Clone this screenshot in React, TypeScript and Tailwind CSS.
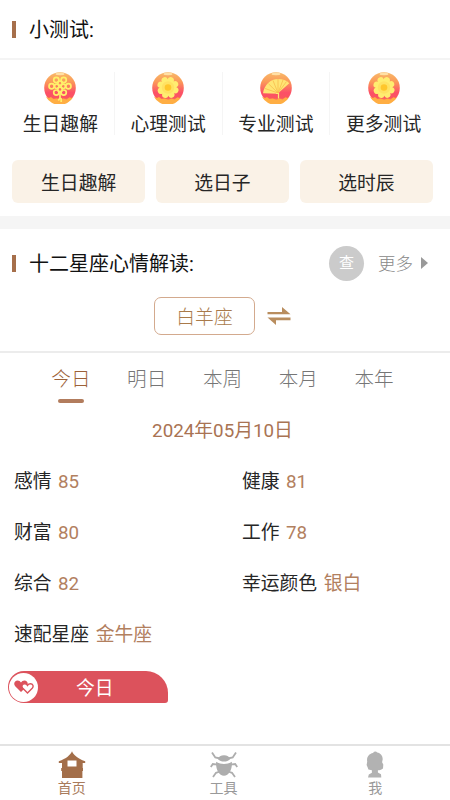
const tests = [
  { label: '生日趣解', icon: 'knot' },
  { label: '心理测试', icon: 'flower' },
  { label: '专业测试', icon: 'fan' },
  { label: '更多测试', icon: 'flower' },
];

const shortcuts = ['生日趣解', '选日子', '选时辰'];

const tabs = ['今日', '明日', '本周', '本月', '本年'];

const scores = [
  { name: '感情', value: '85' },
  { name: '健康', value: '81' },
  { name: '财富', value: '80' },
  { name: '工作', value: '78' },
  { name: '综合', value: '82' },
  { name: '幸运颜色', value: '银白' },
  { name: '速配星座', value: '金牛座' },
];

function Knot() {
  const loops = [
    [12.3, 8], [19.7, 8], [7.6, 14.3], [24.4, 14.3], [12.3, 20.6], [19.7, 20.6],
    [16, 11.2], [12.8, 14.3], [19.2, 14.3], [16, 17.4],
  ];
  return (
    <g fill="none" stroke="#fff06a" strokeWidth="1.7">
      {loops.map(([x, y], i) => (
        <circle key={i} cx={x} cy={y} r={i < 6 ? 2.6 : 2.2} />
      ))}
      <path d="M16 20v6M14.3 28.5l1.7-2.5 1.2 1v3" />
    </g>
  );
}

function Flower() {
  return (
    <g>
      <g fill="#ffed70">
        {[0, 45, 90, 135, 180, 225, 270, 315].map((a) => (
          <ellipse key={a} cx="16" cy="8.2" rx="3.3" ry="3.7" transform={`rotate(${a + 20} 16 15.5)`} />
        ))}
        <circle cx="16" cy="15.5" r="8" />
      </g>
      <circle cx="16" cy="15.5" r="6.2" fill="#ffe263" />
      <circle cx="16" cy="15.5" r="3.3" fill="#ffc62c" />
    </g>
  );
}

function Fan() {
  return (
    <g>
      <path d="M3 21.2C4.3 13 10.5 7 18 7c4.5 0 8.700 1.200 11.300 4.200L20 19.500l-1.800 2.200z" fill="#ffe575" />
      <g stroke="#f8bd4d" strokeWidth=".8">
        <path d="M18 21L5 16.500M18 21L8.500 11.800M18 21L13 8.500M18 21V7M18 21l5-13M18 21l8.500-11.500" />
      </g>
      <path d="M16 21.500h2.500v5" fill="none" stroke="#ffe575" strokeWidth="1.2" />
    </g>
  );
}

function TestIcon({ type }: { type: string }) {
  return (
    <svg viewBox="0 0 32 32" className="h-8 w-8 shrink-0">
      <defs>
        <linearGradient id={`ball-${type}`} x1="0" y1="0" x2="0" y2="1">
          <stop offset="0" stopColor="#f8ba69" />
          <stop offset=".3" stopColor="#fb9a59" />
          <stop offset=".65" stopColor="#fc4f67" />
          <stop offset=".8" stopColor="#fb555f" />
          <stop offset="1" stopColor="#ffad47" />
        </linearGradient>
      </defs>
      <circle cx="16" cy="16" r="15.8" fill={`url(#ball-${type})`} />
      <path d="M2 25l3 1 2-1 2.400 2 3.400-.6 3.400 1.400 3.300-1.200 3 .8 3-2.200 2.200.8 1.600-1A15.800 15.800 0 012 25z" fill="#ffae43" />
      <ellipse cx="16" cy="2" rx="4.5" ry="1.2" fill="#ffe0a5" />
      {type === 'knot' && <Knot />}
      {type === 'flower' && <Flower />}
      {type === 'fan' && <Fan />}
    </svg>
  );
}

function SectionTitle({ text }: { text: string }) {
  return (
    <div className="flex items-center">
      <i className="mr-[13px] h-[17px] w-1 bg-[#a66f4b]" />
      <h2 className="pt-[2px] text-[20px] leading-7 text-[#111]">{text}</h2>
    </div>
  );
}

function HomeIcon() {
  return (
    <svg viewBox="0 0 28 28" className="h-7 w-7" fill="#a36e49">
      <path fillRule="evenodd" d="M14 .3c1.600 3.700 5.400 7.200 13.200 10v1.800h-2.500v5H25v3h-.6v7H4v-7h-.8v-3H4v-5H.8v-1.800C8.400 7.600 12.300 4 14 .3zM9.500 9.500v6h9v-6z" />
    </svg>
  );
}

function BugIcon() {
  return (
    <svg viewBox="0 0 28 28" className="h-7 w-7">
      <g fill="none" stroke="#adadad" strokeWidth="1.8">
        <path d="M2 1.500l3.300 5 5 1M26 1.500l-3.300 5-5 1M.8 16l2-3 5 .6M27.200 16l-2-3-5 .6M3 26l3-4.200 4-1.300M25 26l-3-4.200-4-1.300" />
      </g>
      <g fill="#adadad">
        <path d="M8 8.200C8.500 5.800 10.800 4.200 14 4.200s5.500 1.600 6 4c-1.600 1.600-3.600 2.400-6 2.400s-4.400-.8-6-2.400z" />
        <path d="M6.200 10.800c2.200 1.400 4.800 2.200 7.800 2.200s5.600-.8 7.800-2.200c.8 6.700-2.400 14-7.800 14s-8.600-7.300-7.800-14z" />
      </g>
    </svg>
  );
}

function PersonIcon() {
  return (
    <svg viewBox="0 0 28 28" className="h-7 w-7" fill="#b2b2b2">
      <path d="M13 .7l2-.2 1.200 1c3.300.7 5.500 3.200 5.500 6.700l-.6 3 1.200 2.400-.3 4-2 1.200c-1.300.8-2.500.3-3.100.4v2.300l3.100 1.700.3 3.300H7l.8-3 3.100-1.700v-2.600l-3.500-.6-.8-2.400-1-2.300.6-3.100C5.400 6.400 7.700 2.800 12 2z" />
    </svg>
  );
}

const nav = [
  { label: '首页', icon: <HomeIcon /> },
  { label: '工具', icon: <BugIcon /> },
  { label: '我', icon: <PersonIcon /> },
];

export default function App() {
  return (
    <div className="flex h-[800px] w-[450px] flex-col overflow-hidden bg-white font-[Roboto,'Noto_Sans_CJK_SC',sans-serif] text-[#262626]">
      <section>
        <div className="flex h-[60px] items-center border-b-2 border-[#f4f4f4] pl-3">
          <SectionTitle text="小测试:" />
        </div>
        <div className="ml-[7px] flex w-[430px] pt-3">
          {tests.map((t, i) => (
            <div
              key={i}
              className="flex h-[63px] flex-1 flex-col items-center border-r border-[#f5f5f5] last:border-0"
            >
              <TestIcon type={t.icon} />
              <span className="mt-[7px] text-[18.8px] leading-7">{t.label}</span>
            </div>
          ))}
        </div>
        <div className="mt-[25px] grid grid-cols-3 gap-[10.5px] pr-[17px] pb-[13px] pl-3">
          {shortcuts.map((s) => (
            <button key={s} className="h-[43px] rounded-[6px] bg-[#faf2e7] pt-[5px] text-[18.8px]">
              {s}
            </button>
          ))}
        </div>
      </section>

      <div className="h-[13px] bg-[#f5f5f5]" />

      <section>
        <div className="flex h-[68px] items-center pl-3">
          <SectionTitle text="十二星座心情解读:" />
          <div className="mr-[22px] ml-auto flex items-center text-[#999]">
            <span className="mr-3.5 flex h-[35px] w-[35px] items-center justify-center rounded-full bg-[#cbcbcb] pt-px text-[15px] text-white">
              查
            </span>
            <span className="pt-[3px] text-[17.5px] font-light text-[#888]">更多</span>
            <svg viewBox="0 0 7 12" className="ml-2 h-3 w-[7px]" fill="#999">
              <path d="M0 0l7 6-7 6z" />
            </svg>
          </div>
        </div>
        <div className="flex h-14 items-start border-b-2 border-[#ececec] pl-[154px]">
          <button className="h-[38px] w-[101px] rounded-[7px] border border-[#d3aa8e] pt-1 text-[18.8px] font-light text-[#a97a4a]">
            白羊座
          </button>
          <svg viewBox="0 0 24 18" className="mt-[9.5px] ml-3 h-[18px] w-6" fill="#b98d5e">
            <path d="M.5 5h14.500V0l8.500 7.300H.5zM23.500 10.500H.5L9 18v-4.800h14.500z" />
          </svg>
        </div>
      </section>

      <section className="flex-1">
        <div className="ml-[33px] flex w-[379px] pt-[13px]">
          {tabs.map((t, i) => (
            <div key={t} className="flex flex-1 flex-col items-center">
              <span
                className={
                  i === 0
                    ? 'text-[19.6px] leading-7 font-light text-[#9c6138]'
                    : 'text-[19.6px] leading-7 font-light text-[#767676]'
                }
              >
                {t}
              </span>
              {i === 0 && <i className="mt-[5px] h-1 w-[26px] rounded-full bg-[#b27c5d]" />}
            </div>
          ))}
        </div>
        <p className="mt-[14px] pr-[5px] text-center text-[18.8px] leading-7 text-[#a97353]">2024年05月10日</p>
        <div className="mt-[12px] grid grid-cols-[228px_1fr] pl-3.5 text-[18.8px]">
          {scores.map((s) => (
            <div key={s.name} className="flex h-[51px] items-center gap-[6.5px]">
              <span>{s.name}</span>
              <span className="text-[#b2805f]">{s.value}</span>
            </div>
          ))}
        </div>
        <div className="mt-[10px] ml-2 flex h-8 w-40 items-center rounded-l-[16px] rounded-tr-[22px] rounded-br-[3px] bg-[#dc525c] pl-px">
          <span className="flex h-[29px] w-[29px] items-center justify-center rounded-full bg-white">
            <svg viewBox="0 0 20 14" className="h-3.5 w-5" fill="#dc525c">
              <path d="M7 12L1.200 6.200C-1 3.700.8.5 3.600.5 5 .5 6.200 1.300 7 2.500 7.800 1.300 9 .5 10.400.5c2.900 0 4.500 3.200 2.400 5.700z" />
              <path d="M13.500 13L8.800 8.300C7 6.300 8.300 3.700 10.500 3.700c1.300 0 2.400.7 3 1.700.6-1 1.700-1.700 3-1.700 2.300 0 3.500 2.600 1.700 4.600z" fill="#fff" stroke="#dc525c" strokeWidth="1.4" />
            </svg>
          </span>
          <span className="ml-[38px] pt-1 text-[18.8px] text-white">今日</span>
        </div>
      </section>

      <nav className="flex h-14 border-t-2 border-[#e3e3e3]">
        <div className="-ml-1 flex w-[455px] shrink-0">
          {nav.map((n, i) => (
            <div key={n.label} className="flex flex-1 flex-col items-center pt-[5px]">
              {n.icon}
              <span
                className={
                  i === 0
                    ? 'text-[14px] leading-[18px] text-[#a97b5c]'
                    : 'text-[14px] leading-[18px] text-[#999]'
                }
              >
                {n.label}
              </span>
            </div>
          ))}
        </div>
      </nav>
    </div>
  );
}
